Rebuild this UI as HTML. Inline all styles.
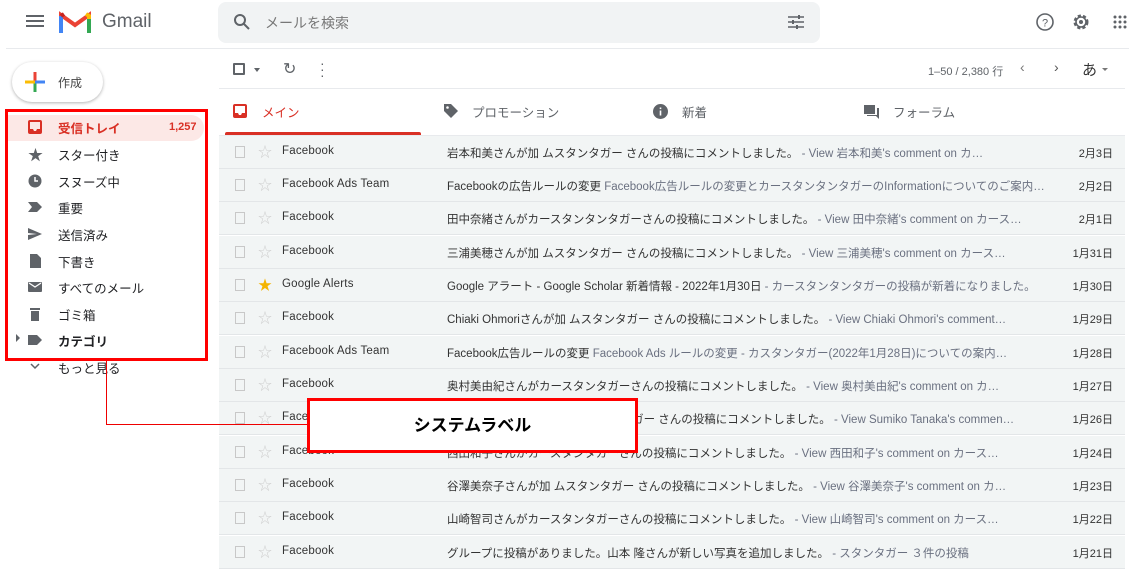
<!DOCTYPE html>
<html><head><meta charset="utf-8"><style>
*{box-sizing:border-box;margin:0;padding:0}
body{width:1129px;height:573px;overflow:hidden;background:#fff;font-family:"Liberation Sans","Noto Sans CJK JP",sans-serif;position:relative;color:#202124}
.abs{position:absolute}
.nav{position:absolute;left:0;width:207px;height:26px;font-size:12.5px;color:#202124;display:flex;align-items:center}
.nav .ic{position:absolute;left:28px;top:4px;width:14px;height:14px}
.nav .t{position:absolute;left:58px;top:2px}
.row{position:absolute;left:219px;width:906px;height:33px;background:#f2f5f5;border-bottom:1px solid #e3e6e8;font-size:11.5px;white-space:nowrap;overflow:hidden}
.row .cb{position:absolute;left:16px;top:10px;width:10px;height:12px;border:1px solid #c8c8c8}
.row .st{position:absolute;left:39px;top:6px;font-size:14px;color:#cfcfcf}
.row .s{position:absolute;left:63px;top:9px;color:#333;letter-spacing:.2px}
.row .sub{position:absolute;left:228px;top:9px;color:#333;width:600px;overflow:hidden}
.row .sub span{color:#6a7080}
.row .d{position:absolute;right:12px;top:9px;color:#333;font-size:11px}
</style></head><body>
<svg class="abs" style="left:26px;top:14px" width="18" height="14"><rect y="1" width="18" height="2" fill="#5f6368"/><rect y="6" width="18" height="2" fill="#5f6368"/><rect y="11" width="18" height="2" fill="#5f6368"/></svg>
<svg class="abs" style="left:59px;top:11px" width="32" height="23" viewBox="0 0 32 23"><path d="M2 22V4l14 10L30 4v18" fill="none" stroke="#ea4335" stroke-width="4"/><path d="M2 22V5" stroke="#4285f4" stroke-width="4"/><path d="M30 22V5" stroke="#34a853" stroke-width="4"/><path d="M27 3l3 2v3" stroke="#fbbc04" stroke-width="4" fill="none"/><path d="M5 3L2 5" stroke="#c5221f" stroke-width="4"/></svg>
<div class="abs" style="left:102px;top:11px;font-size:19px;color:#5f6368">Gmail</div>
<div class="abs" style="left:218px;top:2px;width:602px;height:41px;background:#f1f3f4;border-radius:8px"></div>
<svg class="abs" style="left:233px;top:13px" width="17" height="17"><circle cx="7" cy="7" r="5" fill="none" stroke="#5f6368" stroke-width="2"/><path d="M11 11l5 5" stroke="#5f6368" stroke-width="2"/></svg>
<div class="abs" style="left:265px;top:13px;font-size:14px;color:#777">メールを検索</div>
<svg class="abs" style="left:788px;top:14px" width="16" height="16"><path d="M0 3h16M0 8h16M0 13h16" stroke="#5f6368" stroke-width="1.5"/><rect x="10" y="1" width="2" height="4" fill="#5f6368"/><rect x="4" y="6" width="2" height="4" fill="#5f6368"/><rect x="8" y="11" width="2" height="4" fill="#5f6368"/></svg>
<svg class="abs" style="left:1036px;top:13px" width="18" height="18"><circle cx="9" cy="9" r="8" fill="none" stroke="#5f6368" stroke-width="1.6"/><text x="9" y="13.5" font-size="11" text-anchor="middle" fill="#5f6368" font-family="Liberation Sans">?</text></svg>
<svg class="abs" style="left:1072px;top:13px" width="18" height="18"><circle cx="9" cy="9" r="6" fill="none" stroke="#5f6368" stroke-width="3" stroke-dasharray="3 2"/><circle cx="9" cy="9" r="5" fill="none" stroke="#5f6368" stroke-width="1.6"/><circle cx="9" cy="9" r="2" fill="#5f6368"/></svg>
<svg class="abs" style="left:1113px;top:15px" width="14" height="14" fill="#5f6368"><circle cx="2" cy="2" r="1.5"/><circle cx="7" cy="2" r="1.5"/><circle cx="12" cy="2" r="1.5"/><circle cx="2" cy="7" r="1.5"/><circle cx="7" cy="7" r="1.5"/><circle cx="12" cy="7" r="1.5"/><circle cx="2" cy="12" r="1.5"/><circle cx="7" cy="12" r="1.5"/><circle cx="12" cy="12" r="1.5"/></svg>
<div class="abs" style="left:6px;top:48px;width:1123px;height:1px;background:#e8eaed"></div>
<div class="abs" style="left:12px;top:62px;width:91px;height:40px;border-radius:20px;box-shadow:0 1px 3px rgba(0,0,0,.3);background:#fff"></div>
<svg class="abs" style="left:25px;top:72px" width="20" height="20"><rect x="8.5" y="0" width="3" height="10" fill="#ea4335"/><rect x="8.5" y="10" width="3" height="10" fill="#34a853"/><rect x="0" y="8.5" width="10" height="3" fill="#fbbc04"/><rect x="10" y="8.5" width="10" height="3" fill="#4285f4"/></svg>
<div class="abs" style="left:58px;top:74px;font-size:12px;color:#444">作成</div>
<div class="abs" style="left:6px;top:115px;width:198px;height:26px;background:#fce8e6;border-radius:0 13px 13px 0"></div>
<div class="nav" style="top:116px;color:#d93025;font-weight:bold"><svg class="ic" viewBox="0 0 14 14"><rect x="1" y="1" width="12" height="12" rx="1" fill="none" stroke="#d93025" stroke-width="2"/><path d="M1 9h4l1 2h2l1-2h4v4H1z" fill="#d93025"/></svg><span class="t">受信トレイ</span><span style="position:absolute;left:169px;top:5px;font-size:11px">1,257</span></div>
<div class="nav" style="top:143px"><span class="ic" style="font-size:15px;top:1px;color:#5f6368">★</span><span class="t">スター付き</span></div>
<div class="nav" style="top:170px"><svg class="ic"><circle cx="7" cy="7" r="6.5" fill="#5f6368"/><path d="M7 3v4h3" stroke="#fff" stroke-width="1.5" fill="none"/></svg><span class="t">スヌーズ中</span></div>
<div class="nav" style="top:196px"><svg class="ic"><path d="M0 2h9l5 5-5 5H0l4-5z" fill="#5f6368"/></svg><span class="t">重要</span></div>
<div class="nav" style="top:223px"><svg class="ic"><path d="M0 1l14 6-14 6 0-5 9-1-9-1z" fill="#5f6368"/></svg><span class="t">送信済み</span></div>
<div class="nav" style="top:250px"><svg class="ic"><path d="M2 0h7l4 4v10H2z" fill="#5f6368"/></svg><span class="t">下書き</span></div>
<div class="nav" style="top:276px"><svg class="ic"><rect x="0" y="2" width="14" height="10" rx="1" fill="#5f6368"/><path d="M1 3l6 4 6-4" stroke="#fff" fill="none" stroke-width="1.3"/></svg><span class="t">すべてのメール</span></div>
<div class="nav" style="top:303px"><svg class="ic"><rect x="2" y="1" width="10" height="2" fill="#5f6368"/><rect x="3" y="4" width="8" height="10" fill="#5f6368"/></svg><span class="t">ゴミ箱</span></div>
<div class="nav" style="top:329px;font-weight:bold"><span style="position:absolute;left:16px;top:5px;width:0;height:0;border-left:4px solid #5f6368;border-top:4px solid transparent;border-bottom:4px solid transparent"></span><svg class="ic"><path d="M0 2h9l5 5-5 5H0z" fill="#5f6368"/></svg><span class="t">カテゴリ</span></div>
<div class="nav" style="top:356px"><svg class="ic" style="top:6px"><path d="M3 2l4 4 4-4" stroke="#5f6368" fill="none" stroke-width="1.5"/></svg><span class="t">もっと見る</span></div>
<div class="abs" style="left:233px;top:63px;width:12px;height:12px;border:2px solid #5f6368;border-radius:1px"></div>
<div class="abs" style="left:254px;top:68px;border-top:4px solid #5f6368;border-left:3px solid transparent;border-right:3px solid transparent"></div>
<div class="abs" style="left:283px;top:59px;font-size:16px;color:#5f6368">↻</div>
<div class="abs" style="left:320px;top:60px;font-size:14px;color:#5f6368;line-height:6px">·<br>·<br>·</div>
<div class="abs" style="left:928px;top:63px;font-size:11px;color:#5f6368">1–50 / 2,380 行</div>
<div class="abs" style="left:1020px;top:59px;font-size:14px;color:#777">‹</div>
<div class="abs" style="left:1054px;top:59px;font-size:14px;color:#555">›</div>
<div class="abs" style="left:1082px;top:59px;font-size:15px;color:#333">あ</div>
<div class="abs" style="left:1102px;top:68px;border-top:3px solid #777;border-left:3px solid transparent;border-right:3px solid transparent"></div>
<div class="abs" style="left:219px;top:88px;width:906px;height:1px;background:#e8eaed"></div>
<svg class="abs" style="left:233px;top:104px" width="14" height="14"><rect x="1" y="1" width="12" height="12" rx="1" fill="none" stroke="#d93025" stroke-width="2"/><path d="M1 9h4l1 2h2l1-2h4v4H1z" fill="#d93025"/></svg>
<div class="abs" style="left:262px;top:102px;font-size:12.5px;color:#d93025">メイン</div>
<div class="abs" style="left:225px;top:132px;width:196px;height:3px;background:#d93025;border-radius:2px 2px 0 0"></div>
<svg class="abs" style="left:443px;top:103px" width="16" height="16"><path d="M1 1h7l7 7-7 7-7-7z" fill="#5f6368"/><circle cx="4.5" cy="4.5" r="1.3" fill="#fff"/></svg>
<div class="abs" style="left:472px;top:102px;font-size:12.5px;color:#5f6368">プロモーション</div>
<svg class="abs" style="left:653px;top:104px" width="15" height="15"><circle cx="7.5" cy="7.5" r="7.5" fill="#5f6368"/><rect x="6.7" y="6.5" width="1.6" height="5" fill="#fff"/><rect x="6.7" y="3.5" width="1.6" height="1.6" fill="#fff"/></svg>
<div class="abs" style="left:682px;top:102px;font-size:12.5px;color:#5f6368">新着</div>
<svg class="abs" style="left:864px;top:105px" width="15" height="14"><rect x="0" y="0" width="11" height="9" fill="#5f6368"/><path d="M3 10h10V3h2v11l-3-3H3z" fill="#5f6368"/></svg>
<div class="abs" style="left:893px;top:102px;font-size:12.5px;color:#5f6368">フォーラム</div>
<div class="abs" style="left:219px;top:135px;width:906px;height:1px;background:#e8eaed"></div>
<div class="row" style="top:136px"><div class="cb"></div><div class="st">☆</div><div class="s">Facebook</div><div class="sub">岩本和美さんが加   ムスタンタガー さんの投稿にコメントしました。 <span>- View 岩本和美's comment on カ…</span></div><div class="d">2月3日</div></div>
<div class="row" style="top:169px"><div class="cb"></div><div class="st">☆</div><div class="s">Facebook Ads Team</div><div class="sub">Facebookの広告ルールの変更 <span>Facebook広告ルールの変更とカースタンタンタガーのInformationについてのご案内…</span></div><div class="d">2月2日</div></div>
<div class="row" style="top:202px"><div class="cb"></div><div class="st">☆</div><div class="s">Facebook</div><div class="sub">田中奈緒さんがカースタンタンタガーさんの投稿にコメントしました。 <span>- View 田中奈緒's comment on カース…</span></div><div class="d">2月1日</div></div>
<div class="row" style="top:236px"><div class="cb"></div><div class="st">☆</div><div class="s">Facebook</div><div class="sub">三浦美穂さんが加   ムスタンタガー さんの投稿にコメントしました。 <span>- View 三浦美穂's comment on カース…</span></div><div class="d">1月31日</div></div>
<div class="row" style="top:269px"><div class="cb"></div><div class="st" style="color:#f4b400">★</div><div class="s">Google Alerts</div><div class="sub">Google アラート - Google Scholar 新着情報 - 2022年1月30日 <span>- カースタンタンタガーの投稿が新着になりました。</span></div><div class="d">1月30日</div></div>
<div class="row" style="top:302px"><div class="cb"></div><div class="st">☆</div><div class="s">Facebook</div><div class="sub">Chiaki Ohmoriさんが加   ムスタンタガー さんの投稿にコメントしました。 <span>- View Chiaki Ohmori's comment…</span></div><div class="d">1月29日</div></div>
<div class="row" style="top:336px"><div class="cb"></div><div class="st">☆</div><div class="s">Facebook Ads Team</div><div class="sub">Facebook広告ルールの変更 <span>Facebook Ads ルールの変更 - カスタンタガー(2022年1月28日)についての案内…</span></div><div class="d">1月28日</div></div>
<div class="row" style="top:369px"><div class="cb"></div><div class="st">☆</div><div class="s">Facebook</div><div class="sub">奥村美由紀さんがカースタンタガーさんの投稿にコメントしました。 <span>- View 奥村美由紀's comment on カ…</span></div><div class="d">1月27日</div></div>
<div class="row" style="top:402px"><div class="cb"></div><div class="st">☆</div><div class="s">Facebook</div><div class="sub">Sumiko Tanakaさんが加   ムスタンタガー さんの投稿にコメントしました。 <span>- View Sumiko Tanaka's commen…</span></div><div class="d">1月26日</div></div>
<div class="row" style="top:436px"><div class="cb"></div><div class="st">☆</div><div class="s">Facebook</div><div class="sub">西田和子さんがカースタンタガーさんの投稿にコメントしました。 <span>- View 西田和子's comment on カース…</span></div><div class="d">1月24日</div></div>
<div class="row" style="top:469px"><div class="cb"></div><div class="st">☆</div><div class="s">Facebook</div><div class="sub">谷澤美奈子さんが加   ムスタンタガー さんの投稿にコメントしました。 <span>- View 谷澤美奈子's comment on カ…</span></div><div class="d">1月23日</div></div>
<div class="row" style="top:502px"><div class="cb"></div><div class="st">☆</div><div class="s">Facebook</div><div class="sub">山崎智司さんがカースタンタガーさんの投稿にコメントしました。 <span>- View 山崎智司's comment on カース…</span></div><div class="d">1月22日</div></div>
<div class="row" style="top:536px"><div class="cb"></div><div class="st">☆</div><div class="s">Facebook</div><div class="sub">グループに投稿がありました。山本 隆さんが新しい写真を追加しました。 <span>- スタンタガー  ３件の投稿</span></div><div class="d">1月21日</div></div>
<div class="abs" style="left:5px;top:109px;width:203px;height:252px;border:3px solid #f00"></div>
<div class="abs" style="left:106px;top:361px;width:1px;height:64px;background:#e00"></div>
<div class="abs" style="left:106px;top:424px;width:202px;height:1px;background:#e00"></div>
<div class="abs" style="left:307px;top:398px;width:331px;height:55px;border:3px solid #f00;background:#fff;font-size:17px;font-weight:bold;text-align:center;line-height:49px;color:#000">システムラベル</div>
</body></html>
